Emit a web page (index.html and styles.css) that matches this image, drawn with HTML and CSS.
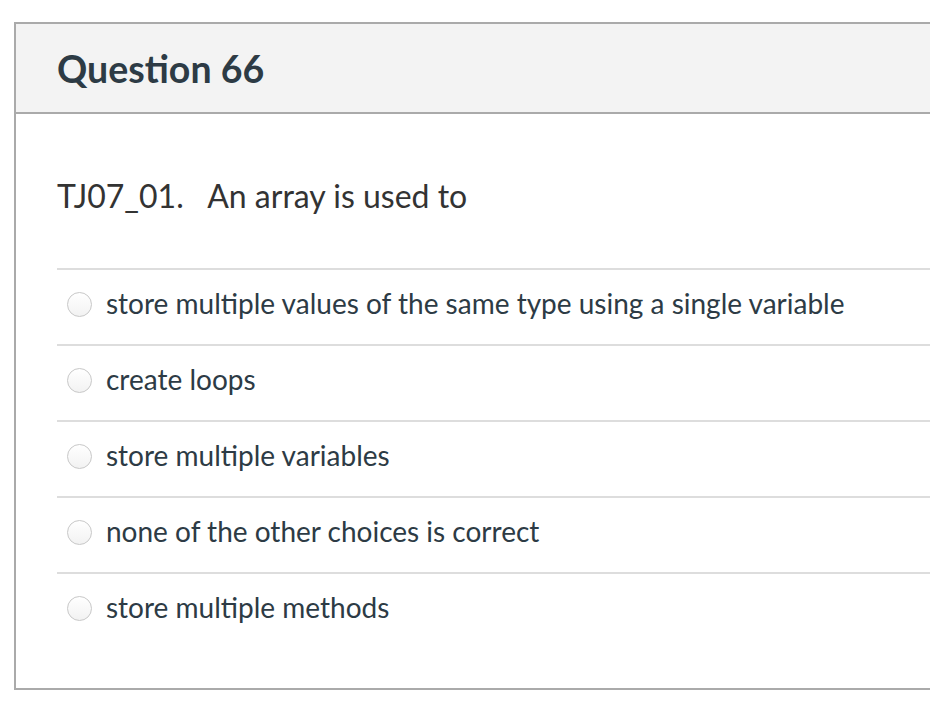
FILE: index.html
```html
<!DOCTYPE html>
<html lang="en">
<head>
  <meta charset="UTF-8" />
  <title>Question 66</title>
  <link rel="stylesheet" href="styles.css">
</head>
<body>
  <div class="question">
    <div class="question-header">
      <h2>Question 66</h2>
    </div>
    <div class="question-body">
      <p class="question-text">TJ07_01.&nbsp;&nbsp; An array is used to</p>
      <ul class="answers">
        <li><span class="radio"></span>store multiple values of the same type using a single variable</li>
        <li><span class="radio"></span>create loops</li>
        <li><span class="radio"></span>store multiple variables</li>
        <li><span class="radio"></span>none of the other choices is correct</li>
        <li><span class="radio"></span>store multiple methods</li>
      </ul>
    </div>
  </div>
</body>
</html>
```

FILE: styles.css
```css
body {
  margin: 0;
  background: #fff;
  font-family: Lato, 'Noto Sans', sans-serif;
  color: #2d3b45;
  overflow: hidden;
}

.question {
  margin: 22px -40px 0 14px;
  border: 2px solid #aaa;
  border-right: none;
}

.question-header {
  background: #f3f3f3;
  border-bottom: 2px solid #aaa;
  height: 88px;
  padding-left: 41px;
  display: flex;
  align-items: center;
}

.question-header h2 {
  margin: 0;
  font-size: 37.5px;
  font-weight: 700;
}

.question-body {
  padding: 0 0 40px 41px;
}

.question-text {
  margin: 0;
  padding: 62px 0 52px;
  font-size: 32px;
  line-height: 40px;
  color: #333;
}

.answers {
  list-style: none;
  margin: 0;
  padding: 0;
}

.answers li {
  border-top: 2px solid #ddd;
  box-sizing: border-box;
  height: 76px;
  padding: 0 0 8px 10px;
  display: flex;
  align-items: center;
  font-size: 28px;
}

.radio {
  width: 23px;
  height: 23px;
  border-radius: 50%;
  border: 1px solid #c8c8c8;
  background: linear-gradient(#fff, #f2f2f2);
  margin: 3px 14px 0 0;
  flex-shrink: 0;
}
```
